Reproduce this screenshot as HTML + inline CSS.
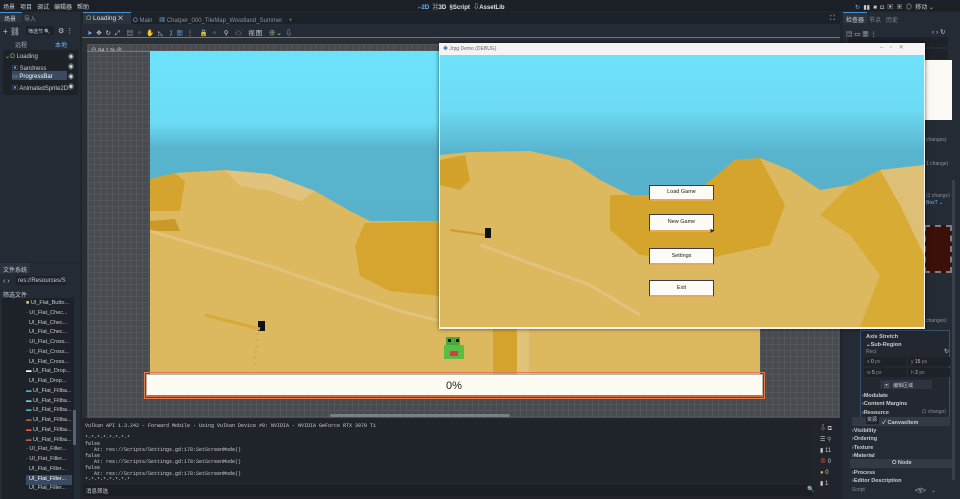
<!DOCTYPE html>
<html><head><meta charset="utf-8"><style>
*{margin:0;padding:0;box-sizing:border-box}
body{width:960px;height:499px;overflow:hidden;background:#21262e;font-family:"Liberation Sans","Noto Sans CJK SC",sans-serif;font-size:6px;color:#c8ccd2;position:relative}
.a{position:absolute}
.t{position:absolute;white-space:nowrap}
.mono{font-family:"Liberation Mono",monospace}
.btn{position:absolute;background:#fdfbf5;border:1px solid #3a3a48;border-bottom:2px solid #e8a85a;font-size:5.5px;color:#222;text-align:center;line-height:13px}
</style></head><body>
<!-- top menu -->
<div class="a" style="left:0;top:0;width:960px;height:11px;background:#1b1f26"></div>
<div class="t" style="left:3px;top:2px;font-size:6px">场景&nbsp;&nbsp;&nbsp;项目&nbsp;&nbsp;&nbsp;调试&nbsp;&nbsp;&nbsp;编辑器&nbsp;&nbsp;&nbsp;帮助</div>
<div class="t" style="left:418px;top:2px;font-size:6px;font-weight:bold;color:#e0e4ea"><span style="color:#68b8ff">⌐2D</span>&nbsp;&nbsp;⌘3D&nbsp;&nbsp;§Script&nbsp;&nbsp;⇩AssetLib</div>
<div class="t" style="left:855px;top:2px;font-size:6px;color:#c8ccd2"><span style="color:#68b8ff">↻</span>&nbsp;&nbsp;▮▮&nbsp;&nbsp;■&nbsp;&nbsp;◘&nbsp;&nbsp;▣&nbsp;&nbsp;▣&nbsp;&nbsp;◎&nbsp;&nbsp;移动 ⌄</div>

<!-- left scene dock -->
<div class="a" style="left:0;top:12px;width:80px;height:250px;background:#252b34"></div>
<div class="a" style="left:0;top:12px;width:22px;height:10px;background:#2d3440;border-top:1px solid #4a90d0"></div>
<div class="t" style="left:4px;top:14px">场景</div><div class="t" style="left:24px;top:14px;color:#8a9098">导入</div>
<div class="t" style="left:3px;top:27px;font-size:8px">+ ⛓</div>
<div class="a" style="left:26px;top:26px;width:28px;height:9px;background:#1d2128"></div>
<div class="t" style="left:28px;top:28px;font-size:5px">筛选节 🔍</div>
<div class="t" style="left:58px;top:27px;font-size:7px">⚙ ⋮</div>
<div class="t" style="left:15px;top:40px;color:#aab">远程</div><div class="t" style="left:55px;top:40px;color:#68b8ff">本地</div>
<div class="a" style="left:3px;top:50px;width:75px;height:45px;background:#1d2128"></div>
<div class="t" style="left:5px;top:53px;font-size:6px"><span style="color:#8ed08a">⌄⭘</span> Loading</div>
<div class="t" style="left:12px;top:63px;font-size:6px"><span style="color:#6aa0e0">▣</span> Sandness</div>
<div class="a" style="left:12px;top:71px;width:55px;height:9px;background:#3a4a60"></div>
<div class="t" style="left:12px;top:73px;font-size:6px;color:#fff"><span style="color:#8ed08a">▭</span> ProgressBar</div>
<div class="t" style="left:12px;top:83px;font-size:6px"><span style="color:#6aa0e0">▣</span> AnimatedSprite2D</div>
<div class="t" style="left:68px;top:53px;line-height:10px">◉<br>◉<br>◉<br>◉</div>

<!-- filesystem dock -->
<div class="a" style="left:0;top:263px;width:80px;height:236px;background:#252b34"></div>
<div class="a" style="left:0;top:263px;width:30px;height:10px;background:#2d3440"></div>
<div class="t" style="left:3px;top:265px">文件系统</div>
<div class="t" style="left:3px;top:278px;font-size:7px">‹ ›</div>
<div class="a" style="left:16px;top:276px;width:50px;height:9px;background:#1d2128"></div>
<div class="t" style="left:18px;top:278px">res://Resources/S</div>
<div class="t" style="left:3px;top:290px">筛选文件</div>
<div class="a" style="left:2px;top:298px;width:72px;height:201px;background:#1d2128"></div>
<div class="a" style="left:73px;top:410px;width:3px;height:35px;background:#5a6270"></div>
<div class="a" style="left:26px;top:475px;width:46px;height:10px;background:#3a4a60"></div>
<div class="t" style="left:26px;top:299px;line-height:9.75px;font-size:5.5px">
<span style="color:#e0c070">■</span> UI_Flat_Butto...<br>
<span style="color:#8c6">·</span> UI_Flat_Chec...<br>
&nbsp;&nbsp;UI_Flat_Chec...<br>
&nbsp;&nbsp;UI_Flat_Chec...<br>
<span style="color:#e76">·</span> UI_Flat_Cross...<br>
<span style="color:#e76">·</span> UI_Flat_Cross...<br>
&nbsp;&nbsp;UI_Flat_Cross...<br>
<span style="color:#fff">▬</span> UI_Flat_Drop...<br>
&nbsp;&nbsp;UI_Flat_Drop...<br>
<span style="color:#5ac">▬</span> UI_Flat_Fillba...<br>
<span style="color:#6ce">▬</span> UI_Flat_Fillba...<br>
<span style="color:#5ab">▬</span> UI_Flat_Fillba...<br>
<span style="color:#a65">▬</span> UI_Flat_Fillba...<br>
<span style="color:#e54">▬</span> UI_Flat_Fillba...<br>
<span style="color:#a65">▬</span> UI_Flat_Fillba...<br>
<span style="color:#a86">-</span> UI_Flat_Filler...<br>
<span style="color:#a86">-</span> UI_Flat_Filler...<br>
&nbsp;&nbsp;UI_Flat_Filler...<br>
<span style="color:#fff">&nbsp;&nbsp;UI_Flat_Filler...</span><br>
&nbsp;&nbsp;UI_Flat_Filler...</div>

<!-- center tabs -->
<div class="a" style="left:82px;top:12px;width:758px;height:12px;background:#1d2128"></div>
<div class="a" style="left:83px;top:12px;width:48px;height:12px;background:#2d3440;border-top:1px solid #4a90d0"></div>
<div class="t" style="left:86px;top:15px;font-size:6.5px;color:#e0e4ea"><span style="color:#8ed08a">⭘</span> Loading ✕</div>
<div class="t" style="left:133px;top:15px;font-size:6px;color:#8a9098"><span style="color:#68b8ff">⭘</span> Main&nbsp;&nbsp;&nbsp;&nbsp;<span style="color:#68b8ff">▦</span> Chatper_000_TileMap_Woodland_Summer&nbsp;&nbsp;&nbsp;&nbsp;+</div>
<div class="t" style="left:830px;top:15px;font-size:7px">⛶</div>
<!-- toolbar -->
<div class="a" style="left:82px;top:24px;width:758px;height:14px;background:#252b34"></div>
<div class="t" style="left:87px;top:27px;font-size:6.5px;color:#c8ccd2;letter-spacing:1px"><span style="color:#68b8ff">➤</span> ✥ ↻ ⤢ &nbsp;▤ ⁘ ✋ ◺ &nbsp;<span style="color:#68b8ff">⁒ ▦</span> ⋮ &nbsp;🔒 ⁘ &nbsp;⚲ &nbsp;☁ &nbsp;视图 &nbsp;<span style="color:#8ed08a">⊕</span>⌄ ⇩</div>
<!-- viewport -->
<div class="a" style="left:82px;top:38px;width:758px;height:380px;background:#474a4f;background-image:linear-gradient(#52555a 1px,transparent 1px),linear-gradient(90deg,#52555a 1px,transparent 1px);background-size:6px 6px"></div>
<div class="a" style="left:82px;top:38px;width:758px;height:6px;background:#2a2f36"></div>
<div class="a" style="left:82px;top:38px;width:5px;height:380px;background:#2a2f36"></div>
<div class="a" style="left:82px;top:37px;width:758px;height:1px;background:#4a80b0"></div>
<div class="t" style="left:91px;top:46px;font-size:5.5px;color:#ccc">⊖ 84.1 % ⊕</div>
<div class="a" style="left:87px;top:51px;width:63px;height:1px;background:#c05a4a"></div>

<!-- main canvas scene -->
<svg class="a" style="left:150px;top:51px" width="610" height="324" viewBox="0 0 610 324">
<defs><linearGradient id="sk" x1="0" y1="0" x2="0" y2="1">
<stop offset="0" stop-color="#6de3fb"/><stop offset="0.22" stop-color="#6cdcf5"/><stop offset="0.3" stop-color="#58b4cd"/><stop offset="1" stop-color="#56aec8"/></linearGradient></defs>
<rect width="610" height="324" fill="url(#sk)"/>
<path d="M0 128 L25 122 L75 119 L120 123 L165 140 L200 160 L220 170 L290 170 L610 170 L610 324 L0 324Z" fill="#dcb95e"/>
<path d="M0 128 L25 122 L35 130 L30 160 L0 160Z" fill="#d4a42e"/>
<path d="M0 170 L25 168 L30 180 L0 180Z" fill="#c99a2a"/>
<path d="M75 119 L120 123 L165 140 L150 150 L120 140 L90 135Z" fill="#e2c88c" opacity=".7"/>
<path d="M215 172 L290 170 L290 245 L240 240 L210 225 L205 195Z" fill="#d5a52f"/>
<path d="M0 180 L120 215 L250 260 L290 270" stroke="#e2c88c" stroke-width="3" fill="none" opacity=".7"/>
<path d="M290 170 L610 170" stroke="#dcb95e"/>
<rect x="108" y="270" width="7" height="10" fill="#111"/>
<path d="M55 264 L110 278" stroke="#d8a838" stroke-width="3"/>
<path d="M108 282 L104 318" stroke="#d8a838" stroke-width="2" stroke-dasharray="2 4"/>
<g transform="translate(294,286)"><rect x="2" y="0" width="14" height="9" fill="#4aa83a"/><rect x="0" y="8" width="20" height="14" fill="#5abe44"/><rect x="6" y="14" width="8" height="5" fill="#d84040"/><rect x="4" y="2" width="3" height="3" fill="#111"/><rect x="12" y="2" width="3" height="3" fill="#111"/></g>
<rect x="343" y="277" width="24" height="47" fill="#d6a42e"/>
<rect x="367" y="277" width="12" height="47" fill="#e2c88c" opacity=".6"/>
</svg>
<!-- progress bar -->
<div class="a" style="left:146px;top:374px;width:617px;height:23px;background:#fdfbf2;border:1px solid #b8b0a0;border-bottom:2px solid #c86a3a"></div>
<div class="t" style="left:446px;top:380px;font-size:11px;color:#222">0%</div>
<div class="a" style="left:144px;top:372px;width:621px;height:27px;border:1px solid #e07a50"></div>
<div class="a" style="left:330px;top:414px;width:180px;height:3px;background:#7a7e86;border-radius:2px"></div>

<!-- output panel -->
<div class="a" style="left:82px;top:419px;width:758px;height:80px;background:#21252b"></div>
<div class="a" style="left:83px;top:420px;width:730px;height:63px;background:#1f232a"></div>
<div class="t mono" style="left:85px;top:423px;font-size:5px;line-height:6px;color:#c8ccd2">Vulkan API 1.3.242 - Forward Mobile - Using Vulkan Device #0: NVIDIA - NVIDIA GeForce RTX 3070 Ti<br><br>*-*-*-*-*-*-*-*<br>false<br>&nbsp;&nbsp;&nbsp;At: res://Scripts/Settings.gd:178:SetScreenMode()<br>false<br>&nbsp;&nbsp;&nbsp;At: res://Scripts/Settings.gd:178:SetScreenMode()<br>false<br>&nbsp;&nbsp;&nbsp;At: res://Scripts/Settings.gd:178:SetScreenMode()<br>*-*-*-*-*-*-*-*</div>
<div class="a" style="left:83px;top:485px;width:730px;height:11px;background:#1b1f25"></div>
<div class="t" style="left:86px;top:487px;font-size:5.5px">消息筛选</div>
<div class="t" style="left:807px;top:486px;font-size:6px">🔍</div>
<div class="t" style="left:820px;top:424px;font-size:6px;line-height:11px">⇩ ⧉<br>☰ <span style="color:#68b8ff">⚲</span><br>▮ 11<br><span style="color:#e05050">⊗</span> 0<br><span style="color:#e0b040">●</span> 0<br>▮ 1</div>

<!-- right inspector -->
<div class="a" style="left:843px;top:12px;width:117px;height:487px;background:#252b34"></div>
<div class="a" style="left:843px;top:12px;width:24px;height:11px;background:#2d3440;border-top:1px solid #4a90d0"></div>
<div class="t" style="left:846px;top:15px">检查器&nbsp;&nbsp;&nbsp;<span style="color:#8a9098">节点&nbsp;&nbsp;&nbsp;历史</span></div>
<div class="t" style="left:846px;top:28px;font-size:6.5px">▤ ▭ ▦ ⋮</div>
<div class="t" style="left:932px;top:28px;font-size:6.5px">‹ › ↻</div>
<div class="a" style="left:848px;top:37px;width:100px;height:10px;background:#1d2128"></div>
<div class="a" style="left:848px;top:49px;width:100px;height:10px;background:#1d2128"></div>
<div class="a" style="left:860px;top:330px;width:90px;height:88px;border:1px solid #3a5070;background:#232830"></div>
<div class="t" style="left:866px;top:333px;line-height:8.3px;font-size:5.5px;font-weight:bold">Axis Stretch<br>⌄Sub-Region</div>
<div class="t" style="left:866px;top:349px;font-size:5px;color:#8a9098">Rect</div>
<div class="t" style="left:944px;top:348px;font-size:6px">↻</div>
<div class="a" style="left:864px;top:357px;width:42px;height:9px;background:#1d2128"></div>
<div class="a" style="left:908px;top:357px;width:42px;height:9px;background:#1d2128"></div>
<div class="a" style="left:864px;top:368px;width:42px;height:9px;background:#1d2128"></div>
<div class="a" style="left:908px;top:368px;width:42px;height:9px;background:#1d2128"></div>
<div class="t" style="left:867px;top:359px;font-size:5px"><span style="color:#888">x</span> 0 <span style="color:#888">px</span></div>
<div class="t" style="left:911px;top:359px;font-size:5px"><span style="color:#888">y</span> 15 <span style="color:#888">px</span></div>
<div class="t" style="left:867px;top:370px;font-size:5px"><span style="color:#888">w</span> 5 <span style="color:#888">px</span></div>
<div class="t" style="left:911px;top:370px;font-size:5px"><span style="color:#888">h</span> 2 <span style="color:#888">px</span></div>
<div class="a" style="left:880px;top:380px;width:52px;height:9px;background:#2d3440"></div>
<div class="t" style="left:884px;top:382px;font-size:5px">▣&nbsp;&nbsp;&nbsp;编辑区域</div>
<div class="t" style="left:862px;top:392px;line-height:8.3px;font-size:5.5px;font-weight:bold">›Modulate<br>›Content Margins<br>›Resource</div>
<div class="t" style="left:922px;top:409px;font-size:5px;color:#8a9098">(1 change)</div>
<div class="a" style="left:852px;top:417px;width:98px;height:9px;background:#333a44"></div>
<div class="a" style="left:866px;top:414px;width:13px;height:10px;background:#1d2128"></div>
<div class="t" style="left:867px;top:416px;font-size:5px">资源</div>
<div class="t" style="left:882px;top:418px;font-size:5.5px;font-weight:bold">✓ CanvasItem</div>
<div class="t" style="left:852px;top:427px;line-height:8.3px;font-size:5.5px;font-weight:bold">›Visibility<br>›Ordering<br>›Texture<br>›Material</div>
<div class="a" style="left:850px;top:459px;width:103px;height:9px;background:#333a44"></div>
<div class="t" style="left:892px;top:460px;font-size:5.5px;font-weight:bold">⭘ Node</div>
<div class="t" style="left:852px;top:469px;line-height:8.3px;font-size:5.5px;font-weight:bold">›Process<br>›Editor Description</div>
<div class="t" style="left:852px;top:487px;font-size:5px;color:#8a9098">Script</div>
<div class="t" style="left:915px;top:487px;font-size:5px">&lt;空&gt;&nbsp;&nbsp;&nbsp;&nbsp;⌄</div>
<div class="a" style="left:952px;top:180px;width:3px;height:300px;background:#3a404a"></div>
<!-- inspector right strip visible beside game window -->
<div class="a" style="left:924px;top:60px;width:28px;height:60px;background:#fbfaf5"></div>
<div class="a" style="left:924px;top:225px;width:28px;height:48px;background:#3a1008;border:2px dashed #7a7e86"></div>
<div class="t" style="left:926px;top:120px;font-size:5px;color:#8a9098;line-height:8px">&nbsp;<br><br>changes)<br><br><br>1 change)<br><br><br><br>(1 change)</div>
<div class="t" style="left:926px;top:200px;font-size:5px;color:#68b8ff">BoxT ⌄</div>
<div class="t" style="left:926px;top:318px;font-size:5px;color:#8a9098">changes)</div>

<!-- game window -->
<div class="a" style="left:439px;top:43px;width:486px;height:286px;background:#f4f4f4;box-shadow:0 0 4px rgba(0,0,0,.6)"></div>
<div class="t" style="left:443px;top:45px;font-size:5px;color:#666"><span style="color:#4a8ad0">◆</span> Jrpg Demo (DEBUG)</div>
<div class="t" style="left:880px;top:44px;font-size:6px;color:#888">–&nbsp;&nbsp;&nbsp;&nbsp;▫&nbsp;&nbsp;&nbsp;&nbsp;✕</div>
<svg class="a" style="left:440px;top:55px" width="484" height="272" viewBox="0 0 484 272">
<defs><linearGradient id="sk2" x1="0" y1="0" x2="0" y2="1">
<stop offset="0" stop-color="#6de3fb"/><stop offset="0.2" stop-color="#6ddaf3"/><stop offset="0.36" stop-color="#58b3cd"/><stop offset="1" stop-color="#56aec8"/></linearGradient></defs>
<rect width="484" height="272" fill="url(#sk2)"/>
<path d="M0 100 L30 97 L90 96 L130 105 L160 125 L190 140 L230 140 L265 130 L295 105 L320 103 L350 115 L380 135 L410 130 L440 115 L484 110 L484 272 L0 272Z" fill="#dcb95e"/>
<path d="M0 105 L25 100 L30 125 L20 135 L0 130Z" fill="#d3a22b"/>
<path d="M170 140 L230 140 L265 130 L295 105 L320 103 L345 150 L330 190 L260 205 L200 200 L170 175Z" fill="#d4a42c"/>
<path d="M380 160 L410 130 L440 115 L484 110 L484 272 L420 272 L440 220 L410 180Z" fill="#d8ab35"/>
<path d="M440 115 L484 110 L484 200 L460 150Z" fill="#ddbf76"/>
<path d="M40 190 L150 230 L200 260" stroke="#e2c27e" stroke-width="3" fill="none"/>
<rect x="45" y="173" width="6" height="10" fill="#111"/>
<path d="M10 175 L45 180" stroke="#c89a30" stroke-width="2"/>
</svg>
<div class="btn" style="left:649px;top:185px;width:65px;height:16px">Load Game</div>
<div class="btn" style="left:649px;top:214px;width:65px;height:18px;line-height:15px">New Game</div>
<div class="btn" style="left:649px;top:248px;width:65px;height:17px;line-height:14px">Settings</div>
<div class="btn" style="left:649px;top:280px;width:65px;height:17px;line-height:14px">Exit</div>
<div class="t" style="left:709px;top:227px;font-size:7px;color:#223">➤</div>
</body></html>
